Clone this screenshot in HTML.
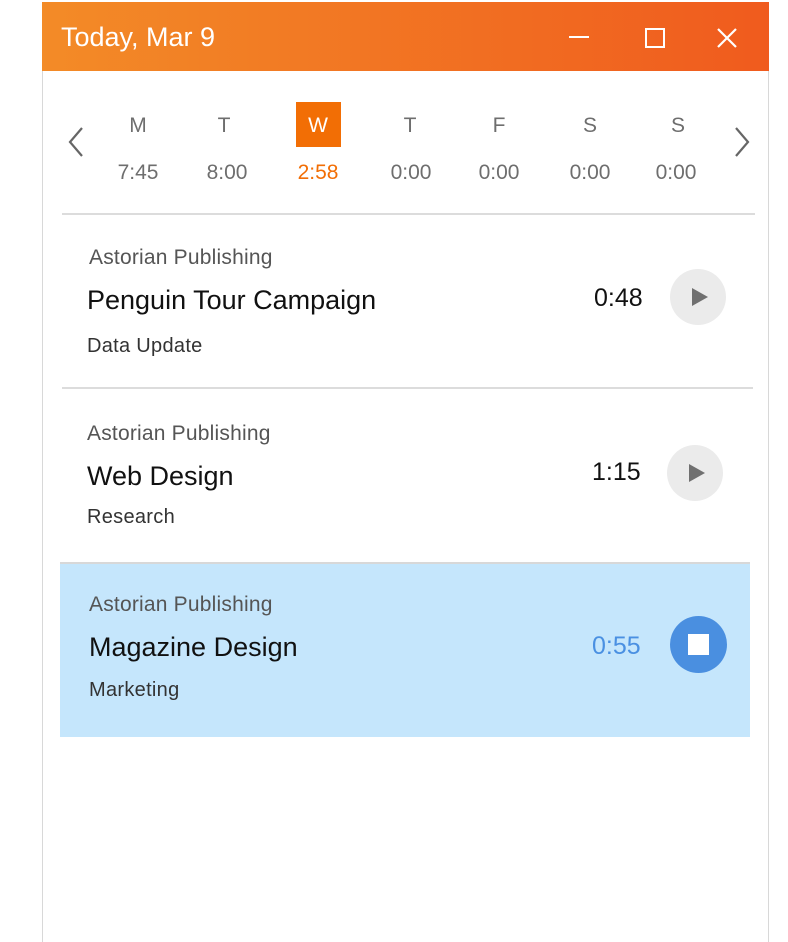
<!DOCTYPE html>
<html><head><style>
body{margin:0;width:788px;height:930px;background:#fff;position:relative;overflow:hidden;font-family:"Liberation Sans",sans-serif}
.a{position:absolute;white-space:nowrap}
.win{position:absolute;left:42px;top:2px;width:725px;height:940px;border-left:1px solid #d8d8d8;border-right:1px solid #d8d8d8}
.title{position:absolute;left:42px;top:2px;width:727px;height:69px;background:linear-gradient(90deg,#f38b27,#f05b1e)}
.d{color:#6e6e6e;font-size:21px;text-align:center;width:60px}
.t{color:#6e6e6e;font-size:21px;text-align:center;width:70px}
.sep{position:absolute;height:2px;background:#dcdcdc}
.co{font-size:21px;color:#555;letter-spacing:0.2px}
.pr{font-size:27px;color:#111}
.ta{font-size:20px;color:#333;letter-spacing:0.3px}
.tm{font-size:25px;color:#111}
.pb{position:absolute;width:56px;height:56px;border-radius:50%;background:#ebebeb}
.pb:after{content:"";position:absolute;left:22px;top:19px;border-left:16px solid #707070;border-top:9px solid transparent;border-bottom:9px solid transparent}
</style></head><body>
<div class="win"></div>
<div class="title"></div>
<div class="a" style="left:61px;top:22px;font-size:27px;color:#fff">Today, Mar 9</div>
<div class="a" style="left:569px;top:36px;width:20px;height:2px;background:#fff"></div>
<div class="a" style="left:645px;top:28px;width:16px;height:16px;border:2px solid #fff"></div>
<svg class="a" style="left:715px;top:26px" width="24" height="24"><path d="M3 3L21 21M21 3L3 21" stroke="#fff" stroke-width="2.2"/></svg>
<svg class="a" style="left:66px;top:126px" width="20" height="32"><path d="M16 2L4 16L16 30" stroke="#666" stroke-width="2.2" fill="none"/></svg>
<svg class="a" style="left:732px;top:126px" width="20" height="32"><path d="M4 2L16 16L4 30" stroke="#666" stroke-width="2.2" fill="none"/></svg>
<div class="a" style="left:296px;top:102px;width:45px;height:45px;background:#f26e05"></div>
<div class="a d" style="left:108px;top:114px">M</div>
<div class="a d" style="left:194px;top:114px">T</div>
<div class="a d" style="left:288px;top:114px;color:#fff">W</div>
<div class="a d" style="left:380px;top:114px">T</div>
<div class="a d" style="left:469px;top:114px">F</div>
<div class="a d" style="left:560px;top:114px">S</div>
<div class="a d" style="left:648px;top:114px">S</div>
<div class="a t" style="left:103px;top:161px">7:45</div>
<div class="a t" style="left:192px;top:161px">8:00</div>
<div class="a t" style="left:283px;top:161px;color:#f26e05">2:58</div>
<div class="a t" style="left:376px;top:161px">0:00</div>
<div class="a t" style="left:464px;top:161px">0:00</div>
<div class="a t" style="left:555px;top:161px">0:00</div>
<div class="a t" style="left:641px;top:161px">0:00</div>
<div class="sep" style="left:62px;top:213px;width:693px"></div>
<div class="a co" style="left:89px;top:246px">Astorian Publishing</div>
<div class="a pr" style="left:87px;top:285px">Penguin Tour Campaign</div>
<div class="a ta" style="left:87px;top:335px">Data Update</div>
<div class="a tm" style="left:594px;top:284px">0:48</div>
<div class="pb" style="left:670px;top:269px"></div>
<div class="sep" style="left:62px;top:387px;width:691px"></div>
<div class="a co" style="left:87px;top:422px">Astorian Publishing</div>
<div class="a pr" style="left:87px;top:461px">Web Design</div>
<div class="a ta" style="left:87px;top:506px">Research</div>
<div class="a tm" style="left:592px;top:458px">1:15</div>
<div class="pb" style="left:667px;top:445px"></div>
<div class="a" style="left:60px;top:562px;width:690px;height:173px;background:#c5e6fc;border-top:2px solid #d8d8d8"></div>
<div class="a co" style="left:89px;top:593px">Astorian Publishing</div>
<div class="a pr" style="left:89px;top:632px">Magazine Design</div>
<div class="a ta" style="left:89px;top:679px">Marketing</div>
<div class="a tm" style="left:592px;top:632px;color:#4a90e2">0:55</div>
<div class="a" style="left:670px;top:616px;width:57px;height:57px;border-radius:50%;background:#4a8fe0"></div>
<div class="a" style="left:688px;top:634px;width:21px;height:21px;background:#fff"></div>
</body></html>
